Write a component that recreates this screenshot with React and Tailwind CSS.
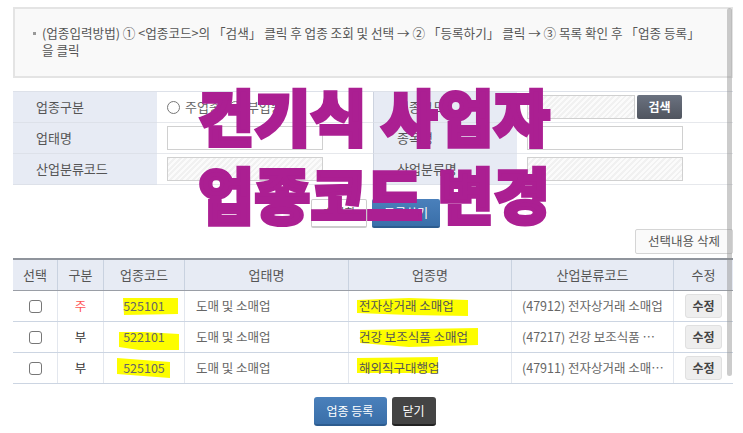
import React from 'react'

const hatch = 'bg-[repeating-linear-gradient(135deg,#f1f1f1_0px,#f1f1f1_2px,#fbfbfb_2px,#fbfbfb_4px)]'

const rows = [
  { kind: '주', red: true, code: '525101', name: '전자상거래 소매업', industry: '(47912) 전자상거래 소매업', codeMark: '19,7 74,7 74,23 20,24', nameMark: '8,9 60,7 119,9 119,25 60,24 8,22' },
  { kind: '부', code: '522101', name: '건강 보조식품 소매업', industry: '(47217) 건강 보조식품 …', codeMark: '15,10 40,10 75,12 75,28 35,28 15,25', nameMark: '11,8 129,6 129,23 60,25 11,21' },
  { kind: '부', code: '525105', name: '해외직구대행업', industry: '(47911) 전자상거래 소매…', codeMark: '13,5 66,9 66,25 13,21', nameMark: '8,5 89,4 89,20 8,20' },
]

// 노란 형광펜 표시
const Marker = ({ points }) => (
  <svg className="absolute inset-0 h-full w-full" aria-hidden="true">
    <polygon points={points} fill="#fdfd00" />
  </svg>
)

const Label = ({ children, divided }) => (
  <div className={`flex items-center bg-[#e7ebf4] pl-[23px] text-[13px] text-[#555] border-b border-[#dde1e9] ${divided ? 'border-l border-l-[#cdd3df]' : ''}`}>{children}</div>
)

const Value = ({ children }) => (
  <div className="flex items-center pl-[10px] border-b border-[#e6e8ec]">{children}</div>
)

const Input = ({ disabled, className = 'w-[156px]' }) => (
  <div className={`h-[24px] border border-[#d0d0d0] ${disabled ? hatch : 'bg-white'} ${className}`} />
)

const Radio = ({ label, className = '' }) => (
  <>
    <span className={`h-[13px] w-[13px] rounded-full border border-[#777] bg-white ${className}`} />
    <span className="ml-[5px] text-[13px] text-[#666]">{label}</span>
  </>
)

const HeadCell = ({ children }) => (
  <div className="flex items-center justify-center text-[13px] text-[#555] bg-[#e7ebf4] border-r border-[#c9d2e0] last:border-r-0">{children}</div>
)

const App = () => {
  return (
    <div className="relative h-[433px] w-[743px] overflow-hidden bg-white font-['Noto_Sans_CJK_KR',sans-serif]">
      <div className="flex h-full w-[733px] flex-col pl-[13px] pt-[7px]">
        {/* 안내 */}
        <div className="h-[71px] border-2 border-[#e4e4e4] bg-[#f9f9f9] pl-[18px] pr-[4px] pt-[15px] text-[12.6px] leading-[17px] text-[#555]">
          <div className="flex">
            <span className="mr-[6px] mt-[8px] h-[3px] w-[3px] shrink-0 bg-[#999]" />
            <p className="whitespace-nowrap">
              (업종입력방법) ① &lt;업종코드&gt;의 「검색」 클릭 후 업종 조회 및 선택 → ② 「등록하기」 클릭 → ③ 목록 확인 후 「업종 등록」
              <br />
              을 클릭
            </p>
          </div>
        </div>

        {/* 입력 폼 */}
        <div className="mt-[13px] grid h-[94px] grid-cols-[144px_216px_144px_216px] grid-rows-3 border-t border-[#dde1e9]">
          <Label>업종구분</Label>
          <Value>
            <Radio label="주업종" />
            <Radio label="부업종" className="ml-[8px]" />
          </Value>
          <Label divided>업종코드</Label>
          <Value>
            <Input disabled className="w-[108px]" />
            <button className="ml-[2px] h-[24px] w-[45px] rounded-[2px] bg-gradient-to-b from-[#6b7280] to-[#50555f] text-[12px] font-bold text-white">검색</button>
          </Value>
          <Label>업태명</Label>
          <Value><Input /></Value>
          <Label divided>종목명</Label>
          <Value><Input /></Value>
          <Label>산업분류코드</Label>
          <Value><Input disabled /></Value>
          <Label divided>산업분류명</Label>
          <Value><Input disabled /></Value>
        </div>

        <div className="mt-[14px] flex h-[29px] justify-center gap-[5px] pl-[5px]">
          <button className="w-[56px] rounded-[2px] border border-b-2 border-[#ccc] bg-white text-[12px] text-[#555]">초기화</button>
          <button className="w-[68px] rounded-[2px] border-b-2 border-[#2d5c8f] bg-gradient-to-b from-[#4a80bb] to-[#3a6fa9] text-[12px] text-white">등록하기</button>
        </div>

        <div className="mt-[1px] flex h-[25px] justify-end">
          <button className="w-[98px] rounded-[2px] border border-[#d5d5d5] bg-[#fafafa] text-[12.5px] text-[#555]">선택내용 삭제</button>
        </div>

        {/* 업종 목록 */}
        <div className="mt-[4px] w-[720px] border-t-2 border-[#8f949c]">
          <div className="grid h-[31px] grid-cols-[45px_46px_81px_164px_163px_162px_59px] border-b border-[#9a9ea6]">
            {['선택', '구분', '업종코드', '업태명', '업종명', '산업분류코드', '수정'].map((title) => (
              <HeadCell key={title}>{title}</HeadCell>
            ))}
          </div>
          {rows.map((row) => (
            <div key={row.code} className="grid h-[31px] grid-cols-[45px_46px_81px_164px_163px_162px_59px] border-b border-[#ccd5e2] text-[12.5px] text-[#666]">
              <div className="flex items-center justify-center border-r border-[#e3e7ee]">
                <span className="h-[13px] w-[13px] rounded-[3px] border border-[#777] bg-white" />
              </div>
              <div className={`flex items-center justify-center border-r border-[#e3e7ee] ${row.red ? 'text-[#f55]' : 'text-[#333]'}`}>{row.kind}</div>
              <div className="relative flex items-center justify-center border-r border-[#e3e7ee]">
                <Marker points={row.codeMark} />
                <span className="relative text-[#666]">{row.code}</span>
              </div>
              <div className="flex items-center border-r border-[#e3e7ee] pl-[11px]">도매 및 소매업</div>
              <div className="relative flex items-center border-r border-[#e3e7ee] pl-[10px]">
                <Marker points={row.nameMark} />
                <span className="relative text-[#555]">{row.name}</span>
              </div>
              <div className="flex items-center border-r border-[#e3e7ee] pl-[10px] whitespace-nowrap">{row.industry}</div>
              <div className="flex items-center justify-center">
                <button className="h-[24px] w-[37px] rounded-[3px] border border-[#e0e0e0] bg-[#eee] text-[12px] font-bold text-[#444]">수정</button>
              </div>
            </div>
          ))}
        </div>

        <div className="mt-[13px] flex h-[29px] justify-center gap-[5px] pl-[3px]">
          <button className="w-[73px] rounded-[3px] border-b-2 border-[#2d5c8f] bg-gradient-to-b from-[#4a80bb] to-[#3a6fa9] text-[12px] text-white">업종 등록</button>
          <button className="w-[44px] rounded-[3px] border-b-2 border-[#222] bg-[#444] text-[12px] text-white">닫기</button>
        </div>
      </div>

      {/* 스크롤바 */}
      <div className="absolute left-[727px] top-[8px] h-[368px] w-[5px] rounded-full bg-[#8f8f8f]/45" />

      {/* 제목 오버레이 */}
      <div className="absolute left-[3px] top-[76px] w-[743px] text-center text-[60px] font-black leading-[78px] tracking-[1px] text-[#ab1f92] [-webkit-text-stroke:4px_#ab1f92]">
        <p>건기식 사업자</p>
        <p>업종코드 변경</p>
      </div>
    </div>
  )
}

export default App
